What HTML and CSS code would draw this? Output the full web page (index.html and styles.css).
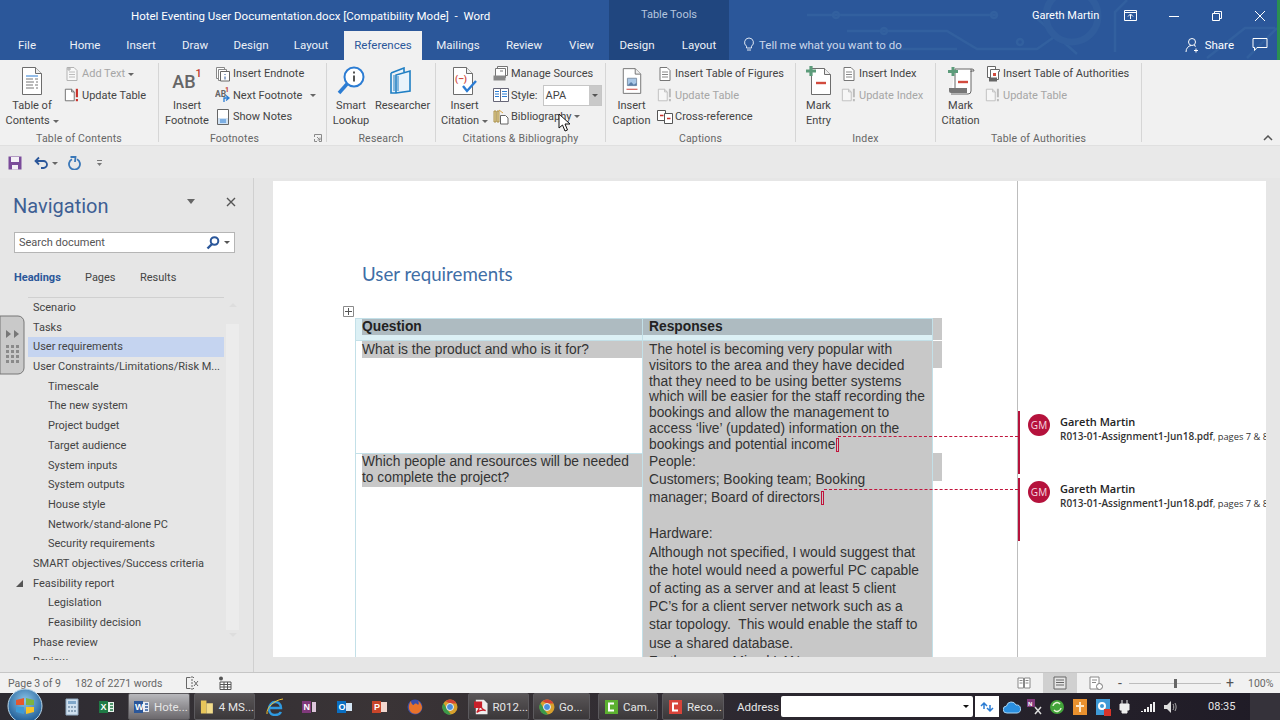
FILE: index.html
```html
<!DOCTYPE html>
<html lang="en">
<head>
<meta charset="utf-8">
<title>Hotel Eventing User Documentation.docx - Word</title>
<link rel="stylesheet" href="styles.css">
</head>
<body>
<svg class="defs" width="0" height="0" aria-hidden="true">
  <defs>
    <symbol id="doc" viewBox="0 0 24 30"><path d="M2.5 1.5h13l6 6v21h-19z" fill="#fff" stroke="#6d6d6d"/><path d="M15.500 1.500v6h6" fill="#eee" stroke="#6d6d6d"/></symbol>
    <symbol id="smalldoc" viewBox="0 0 16 16"><path d="M3 1.500h7l3 3v10H3z" fill="#fff" stroke="#777"/><path d="M5 6h6M5 8.500h6M5 11h6" stroke="#888"/></symbol>
    <symbol id="update" viewBox="0 0 18 16"><path d="M1.500 1.500h7l3 3v10h-10z" fill="#fff" stroke="#666"/><path d="M8.500 1.500v3h3" fill="none" stroke="#666"/><path d="M14.500 1v9.500" stroke="#c8312a" stroke-width="2.400"/><path d="M14.500 12.500v2.500" stroke="#c8312a" stroke-width="2.400"/></symbol>
    <symbol id="update-off" viewBox="0 0 18 16"><path d="M1.500 1.500h7l3 3v10h-10z" fill="#f6f6f6" stroke="#bbb"/><path d="M8.500 1.500v3h3" fill="none" stroke="#bbb"/><path d="M14.500 1v9.500M14.500 12.500v2.500" stroke="#bbb" stroke-width="2.200"/></symbol>
  </defs>
</svg>
<div class="app">
  <header class="head">
    <svg class="circuit" viewBox="0 0 470 59" width="470" height="59" aria-hidden="true">
      <g fill="none" stroke="#32609f" stroke-width="2.500">
        <path d="M0 15h190M40 31h100l30 18h60l20-14M70 49h80"/>
        <circle cx="29" cy="15" r="3"/><circle cx="187" cy="15" r="3"/><circle cx="77" cy="31" r="3"/><circle cx="213" cy="42" r="3"/>
        <path d="M225 14l45 40M320 0l-12 12v40M400 58l38-30h30M440 58l30-30"/>
      </g>
      <circle cx="265" cy="16" r="26" fill="none" stroke="#305d9d" stroke-width="7"/>
    </svg>
    <div class="title-row">
      <div class="doc-title">Hotel Eventing User Documentation.docx [Compatibility Mode]  -  Word</div>
      <div class="context-label">Table Tools</div>
      <div class="user">Gareth Martin</div>
      <svg class="win win-ribbon" width="16" height="14" viewBox="0 0 16 14"><path d="M1.500 1.500h12v10h-12zM1.500 3.500h12M7.500 10V5.500M5 7.500l2.500-2.500 2.500 2.500" fill="none" stroke="#fff"/></svg>
      <svg class="win win-min" width="12" height="12" viewBox="0 0 12 12"><path d="M1 6.500h10" stroke="#fff"/></svg>
      <svg class="win win-max" width="12" height="12" viewBox="0 0 12 12"><path d="M1.500 3.500h7v7h-7zM3.500 3.500v-2h7v7h-2" fill="none" stroke="#fff"/></svg>
      <svg class="win win-close" width="12" height="12" viewBox="0 0 12 12"><path d="M1 1l10 10M11 1L1 11" stroke="#fff"/></svg>
    </div>
    <nav class="tab-row">
      <span class="tab w-file">File</span>
      <span class="tab w-home">Home</span>
      <span class="tab w-insert">Insert</span>
      <span class="tab w-draw">Draw</span>
      <span class="tab w-design">Design</span>
      <span class="tab w-layout">Layout</span>
      <span class="tab tab-active w-refs">References</span>
      <span class="tab w-mail">Mailings</span>
      <span class="tab w-review">Review</span>
      <span class="tab w-view">View</span>
      <div class="context-tabs">
        <span class="tab w-cdesign">Design</span>
        <span class="tab w-clayout">Layout</span>
      </div>
      <div class="tell">
        <svg width="12" height="15" viewBox="0 0 12 15"><path d="M6 1a4.500 4.500 0 0 0-2.500 8.200V11h5V9.200A4.500 4.500 0 0 0 6 1zM4 13h4" fill="none" stroke="#dfe7f3"/></svg>
        <span>Tell me what you want to do</span>
      </div>
      <div class="share">
        <svg width="15" height="16" viewBox="0 0 15 16"><circle cx="7" cy="5" r="3.500" fill="none" stroke="#fff"/><path d="M1 15c0-4 2.500-6 5-6.500M9 8.500c1 .3 1.500.6 2 1M11 11.500v4M9 13.500h4" fill="none" stroke="#fff"/></svg>
        <span>Share</span>
      </div>
      <svg class="comment-ico" width="16" height="15" viewBox="0 0 16 15"><path d="M1 1.500h14v9H5l-2.500 3v-3H1z" fill="none" stroke="#fff"/></svg>
    </nav>
  </header>

  <section class="ribbon">
    <div class="group g-toc">
      <div class="group-body">
        <div class="large w64">
          <div class="large-ico"><svg width="24" height="30" viewBox="0 0 24 30"><use href="#doc"/><path d="M6 10h12" stroke="#2b7cd3"/><path d="M6 13h7M6 16h8M6 19h7M6 22h8" stroke="#777"/><path d="M15 13h3M16 16h2M15 19h3M16 22h2" stroke="#777"/></svg></div>
          <div class="large-label">Table of<br>Contents <i class="caret"></i></div>
        </div>
        <div class="small-col">
          <div class="small off"><svg class="ico" width="16" height="16" viewBox="0 0 16 16"><use href="#smalldoc" opacity=".5"/><path d="M3 3h4M5 1v4" stroke="#aaa"/></svg><span>Add Text <i class="caret"></i></span></div>
          <div class="small"><svg class="ico" width="16" height="16" viewBox="0 0 18 16"><use href="#update"/></svg><span>Update Table</span></div>
        </div>
      </div>
      <div class="group-label">Table of Contents</div>
    </div>

    <div class="group g-foot">
      <div class="group-body">
        <div class="large w56">
          <div class="large-ico ab">AB<sup>1</sup></div>
          <div class="large-label">Insert<br>Footnote</div>
        </div>
        <div class="small-col">
          <div class="small"><svg class="ico" width="16" height="16" viewBox="0 0 16 16"><path d="M1.500 1.500h8v11h-8z" fill="#fff" stroke="#888"/><path d="M3.500 3.500h8v11h-8z" fill="#fff" stroke="#888"/><path d="M5.500 5.500h9v9.500h-9z" fill="#fff" stroke="#666"/><path d="M10 8v1M10 10.500v3" stroke="#2b579a"/></svg><span>Insert Endnote</span></div>
          <div class="small"><svg class="ico" width="16" height="16" viewBox="0 0 16 16"><text x="0" y="10" class="mini-ab">AB</text><text x="10" y="5" class="mini-one">1</text><path d="M9 15V11h4M11 8.500l3 2.500-3 2.500" fill="none" stroke="#2b7cd3" stroke-width="1.300"/></svg><span>Next Footnote</span><i class="caret far"></i></div>
          <div class="small"><svg class="ico" width="16" height="16" viewBox="0 0 16 16"><path d="M2.500 .5h11v15h-11z" fill="#fff" stroke="#666"/><path d="M3 9h10v6H3z" fill="#cfe1f3"/><path d="M5 11h6M5 13h6" stroke="#2b7cd3"/></svg><span>Show Notes</span></div>
        </div>
      </div>
      <div class="group-label label-foot">Footnotes</div>
      <svg class="launcher" width="8" height="8" viewBox="0 0 8 8"><path d="M.5 3V.5H7.500V7.500H5M3 3l3 3M6 3.500V6H3.500M.5 5v2.500H3" fill="none" stroke="#8a8a8a"/></svg>
    </div>

    <div class="group g-res">
      <div class="group-body">
        <div class="large w48">
          <div class="large-ico"><svg width="28" height="30" viewBox="0 0 28 30"><circle cx="17" cy="11" r="9.500" fill="#fff" stroke="#2b7cd3" stroke-width="2"/><path d="M10 18L2 27" stroke="#2b7cd3" stroke-width="3.500"/><path d="M17 9.500v6" stroke="#555" stroke-width="2"/><path d="M17 5.500v2" stroke="#555" stroke-width="2"/></svg></div>
          <div class="large-label">Smart<br>Lookup</div>
        </div>
        <div class="large w52">
          <div class="large-ico"><svg width="22" height="28" viewBox="0 0 22 28"><path d="M1 6l13-5v4M1 6v20h5V8l14-4v20L6 26" fill="#e9f3fb" stroke="#1f7fc4" stroke-width="1.600"/><path d="M4 8v16M8 9v15" stroke="#1f7fc4"/></svg></div>
          <div class="large-label">Researcher</div>
        </div>
      </div>
      <div class="group-label">Research</div>
    </div>

    <div class="group g-cit">
      <div class="group-body">
        <div class="large w57">
          <div class="large-ico"><svg width="28" height="30" viewBox="0 0 28 30"><use href="#doc" width="24" height="30"/><text x="4" y="16" class="mini-red">(–)</text><path d="M12 20l4 5 9-10" fill="none" stroke="#2b7cd3" stroke-width="2.400"/></svg></div>
          <div class="large-label">Insert<br>Citation <i class="caret"></i></div>
        </div>
        <div class="small-col">
          <div class="small"><svg class="ico" width="16" height="16" viewBox="0 0 16 16"><path d="M4.500 .5h10v9h-10z" fill="#fff" stroke="#777"/><path d="M2.500 2.500h10v9h-10z" fill="#fff" stroke="#777"/><path d="M.5 9.500h12v5H.5z" fill="#888"/><path d="M7 5h3" stroke="#777"/></svg><span>Manage Sources</span></div>
          <div class="small"><svg class="ico" width="16" height="16" viewBox="0 0 16 16"><path d="M.5 1.500h7v13h-7zM7.500 1.500h8v13h-8z" fill="#fff" stroke="#667"/><path d="M2 4.500h4M2 7h4M2 9.500h4M9 4.500h5M9 7h5M9 9.500h5" stroke="#2b7cd3"/></svg><span>Style:</span><span class="combo"><span class="combo-val">APA</span><span class="combo-btn"><i class="caret dark"></i></span></span></div>
          <div class="small"><svg class="ico" width="16" height="16" viewBox="0 0 16 16"><path d="M1 2h2v11H1zM4 2h2v11H4z" fill="#e8d9a0" stroke="#a98f4a"/><path d="M7.500 6.500h5l2.500 2.500v6h-7.500z" fill="#fff" stroke="#666"/><path d="M6 1l4 3" stroke="#d9a441"/></svg><span>Bibliography</span><i class="caret near"></i></div>
        </div>
      </div>
      <div class="group-label">Citations &amp; Bibliography</div>
    </div>

    <div class="group g-cap">
      <div class="group-body">
        <div class="large w51">
          <div class="large-ico"><svg width="22" height="28" viewBox="0 0 24 30"><use href="#doc"/><path d="M7 12h10v8H7z" fill="#a9c7e6" stroke="#7c8ea3"/><path d="M7 20l4-4 3 3 3-2v3z" fill="#5b7fa8"/><path d="M6 24h12" stroke="#c8312a"/></svg></div>
          <div class="large-label">Insert<br>Caption</div>
        </div>
        <div class="small-col">
          <div class="small"><svg class="ico" width="16" height="16" viewBox="0 0 16 16"><use href="#smalldoc"/></svg><span>Insert Table of Figures</span></div>
          <div class="small off"><svg class="ico" width="16" height="16" viewBox="0 0 18 16"><use href="#update-off"/></svg><span>Update Table</span></div>
          <div class="small"><svg class="ico" width="16" height="16" viewBox="0 0 16 16"><path d="M.5 1.500h8v10h-8z" fill="#fff" stroke="#555"/><path d="M7.500 4.500h8v10h-8z" fill="#fff" stroke="#555"/><path d="M3 6.500h3.500M10 9.500h3.500" stroke="#c8312a" stroke-width="1.500"/></svg><span>Cross-reference</span></div>
        </div>
      </div>
      <div class="group-label">Captions</div>
    </div>

    <div class="group g-idx">
      <div class="group-body">
        <div class="large w45">
          <div class="large-ico"><svg width="28" height="30" viewBox="0 0 28 30"><path d="M6.500 2.500h13l6 6v20h-19z" fill="#fff" stroke="#6d6d6d"/><path d="M19.500 2.500v6h6" fill="#eee" stroke="#6d6d6d"/><path d="M11 17h10" stroke="#d24b3e" stroke-width="2.400"/><path d="M6 0v10M1 5h10" stroke="#5c9b7a" stroke-width="3.200"/></svg></div>
          <div class="large-label">Mark<br>Entry</div>
        </div>
        <div class="small-col">
          <div class="small"><svg class="ico" width="16" height="16" viewBox="0 0 16 16"><use href="#smalldoc"/></svg><span>Insert Index</span></div>
          <div class="small off"><svg class="ico" width="16" height="16" viewBox="0 0 18 16"><use href="#update-off"/></svg><span>Update Index</span></div>
        </div>
      </div>
      <div class="group-label">Index</div>
    </div>

    <div class="group g-toa">
      <div class="group-body">
        <div class="large w49">
          <div class="large-ico"><svg width="30" height="30" viewBox="0 0 30 30"><path d="M9 3h17a2 2 0 0 1 2 2h-3v20a3 3 0 0 1-3 3H5" fill="#fff" stroke="#666"/><path d="M3 22h18v5H5a2 2 0 0 1-2-2z" fill="#777"/><path d="M9 3v19M25 3v3" stroke="#666"/><path d="M12 16h10" stroke="#d24b3e" stroke-width="2.400"/><path d="M7 1v9M2 5.500h10" stroke="#5c9b7a" stroke-width="3"/></svg></div>
          <div class="large-label">Mark<br>Citation</div>
        </div>
        <div class="small-col">
          <div class="small"><svg class="ico" width="16" height="16" viewBox="0 0 16 16"><path d="M2.500 .5h8v11h-8z" fill="#fff" stroke="#666"/><path d="M5.500 3.500h9v2h-1v8h-8z" fill="#fff" stroke="#666"/><path d="M4 11.500h8v4H4z" fill="#666"/><path d="M8 7h3v3H8z" fill="#d24b3e"/></svg><span>Insert Table of Authorities</span></div>
          <div class="small off"><svg class="ico" width="16" height="16" viewBox="0 0 18 16"><use href="#update-off"/></svg><span>Update Table</span></div>
        </div>
      </div>
      <div class="group-label">Table of Authorities</div>
    </div>
    <svg class="collapse" width="10" height="6" viewBox="0 0 10 6"><path d="M1 5l4-4 4 4" fill="none" stroke="#555" stroke-width="1.500"/></svg>
    <svg class="pointer" width="16" height="20" viewBox="0 0 16 20"><path d="M2 1v14l3.500-3 2.500 6 2.500-1-2.500-6h5z" fill="#fff" stroke="#111"/></svg>
  </section>

  <div class="qat">
    <svg class="q-save" width="14" height="14" viewBox="0 0 14 14"><path d="M.5.5h13v13H.5z" fill="#7a4b9a"/><path d="M3 1h8v5H3z" fill="#f3f0f6"/><path d="M4 9h6v4.500H4z" fill="#f3f0f6"/></svg>
    <svg class="q-undo" width="15" height="14" viewBox="0 0 15 14"><path d="M5 1.500L1.500 5 5 8.500M2 5h7.500a3.500 3.500 0 0 1 0 7H7" fill="none" stroke="#2b579a" stroke-width="1.800"/></svg>
    <i class="caret q-caret"></i>
    <svg class="q-redo" width="14" height="14" viewBox="0 0 14 14"><path d="M5 3.200a5.500 5.500 0 1 0 5 0" fill="none" stroke="#3b78b8" stroke-width="1.800"/><path d="M3.500 1h5l-.5 5" fill="none" stroke="#3b78b8" stroke-width="1.800"/></svg>
    <svg class="q-more" width="7" height="8" viewBox="0 0 7 8"><path d="M1 1.500h5" stroke="#777"/><path d="M1 4h5l-2.500 3z" fill="#777"/></svg>
  </div>

  <main class="workspace">
    <aside class="nav">
      <div class="nav-head">
        <h2 class="nav-title">Navigation</h2>
        <i class="nav-drop"></i>
        <svg class="nav-close" width="10" height="10" viewBox="0 0 10 10"><path d="M1 1l8 8M9 1L1 9" stroke="#555" stroke-width="1.400"/></svg>
      </div>
      <div class="search">
        <span class="search-text">Search document</span>
        <svg width="14" height="14" viewBox="0 0 14 14"><circle cx="8.500" cy="5" r="3.800" fill="none" stroke="#2b579a" stroke-width="2"/><path d="M6 8l-4.500 4.500" stroke="#2b579a" stroke-width="2.400"/></svg>
        <i class="caret dark"></i>
      </div>
      <div class="nav-tabs">
        <span class="nav-tab nav-tab-on">Headings</span>
        <span class="nav-tab">Pages</span>
        <span class="nav-tab">Results</span>
      </div>
      <div class="tree-wrap">
        <ul class="tree">
          <li>Scenario</li>
          <li>Tasks</li>
          <li class="sel">User requirements</li>
          <li>User Constraints/Limitations/Risk M...</li>
          <li class="sub">Timescale</li>
          <li class="sub">The new system</li>
          <li class="sub">Project budget</li>
          <li class="sub">Target audience</li>
          <li class="sub">System inputs</li>
          <li class="sub">System outputs</li>
          <li class="sub">House style</li>
          <li class="sub">Network/stand-alone PC</li>
          <li class="sub">Security requirements</li>
          <li>SMART objectives/Success criteria</li>
          <li class="open">Feasibility report</li>
          <li class="sub">Legislation</li>
          <li class="sub">Feasibility decision</li>
          <li>Phase review</li>
          <li>Review</li>
        </ul>
        <div class="scroll">
          <i class="sc-up"></i>
          <div class="sc-track"></div>
          <i class="sc-down"></i>
        </div>
      </div>
      <div class="dock">
        <svg width="26" height="60" viewBox="0 0 26 60"><path d="M0 1h18a6 6 0 0 1 6 6v46a6 6 0 0 1-6 6H0z" fill="#c9c9c9" stroke="#777"/><path d="M6 15l5 4-5 4zM14 15l5 4-5 4z" fill="#777"/><path d="M6 30h3v3H6zM11 30h3v3h-3zM16 30h3v3h-3zM6 35h3v3H6zM11 35h3v3h-3zM16 35h3v3h-3zM6 40h3v3H6zM11 40h3v3h-3zM16 40h3v3h-3zM6 45h3v3H6zM11 45h3v3h-3zM16 45h3v3h-3z" fill="#8a8a8a"/></svg>
      </div>
    </aside>

    <div class="docview">
      <div class="sheet">
        <article class="page">
          <h1 class="doc-h">User requirements</h1>
          <div class="dtable">
            <svg class="handle" width="11" height="11" viewBox="0 0 11 11"><path d="M.5.5h10v10H.5z" fill="#fff" stroke="#8a8a8a"/><path d="M5.500 2v7M2 5.500h7" stroke="#555"/></svg>
            <div class="cell c-head"><div class="shade shade-head"><b>Question</b></div></div>
            <div class="cell c-head c-r"><div class="shade-head r-head"><b>Responses</b></div></div>
            <div class="stub stub-h"></div>

            <div class="cell c-q"><div class="shade q1">What is the product and who is it for?</div></div>
            <div class="cell c-resp r1">The hotel is becoming very popular with<br>visitors to the area and they have decided<br>that they need to be using better systems<br>which will be easier for the staff recording the<br>bookings and allow the management to<br>access ‘live’ (updated) information on the<br>bookings and potential income<i class="mark"></i></div>
            <div class="stub stub-1"></div>

            <div class="cell c-q"><div class="shade q2">Which people and resources will be needed<br>to complete the project?</div></div>
            <div class="cell c-resp r2">People:<br>Customers; Booking team; Booking<br>manager; Board of directors<i class="mark"></i><br><br>Hardware:<br>Although not specified, I would suggest that<br>the hotel would need a powerful PC capable<br>of acting as a server and at least 5 client<br>PC’s for a client server network such as a<br>star topology.&nbsp; This would enable the staff to<br>use a shared database.<br>Furthermore, Mixed LAN</div>
            <div class="stub stub-2"></div>
          </div>
        </article>
        <aside class="comments">
          <div class="comment">
            <span class="avatar">GM</span>
            <div class="c-body"><div class="c-name">Gareth Martin</div><div class="c-src"><b>R013-01-Assignment1-Jun18.pdf</b>, pages 7 &amp; 8</div></div>
          </div>
          <div class="comment">
            <span class="avatar">GM</span>
            <div class="c-body"><div class="c-name">Gareth Martin</div><div class="c-src"><b>R013-01-Assignment1-Jun18.pdf</b>, pages 7 &amp; 8</div></div>
          </div>
        </aside>
        <i class="link link-1"></i>
        <i class="link link-2"></i>
      </div>
    </div>
  </main>

  <footer class="status">
    <span class="st-page">Page 3 of 9</span>
    <span class="st-words">182 of 2271 words</span>
    <svg class="st-a" width="14" height="14" viewBox="0 0 14 14"><path d="M5.500 1.500h-4v11h4M8 1.500h1M8 12.500h1" fill="none" stroke="#666"/><path d="M7 0v14" stroke="#666" stroke-dasharray="2 1"/><path d="M9 5l4 5M13 5l-4 5" stroke="#666"/></svg>
    <svg class="st-b" width="14" height="14" viewBox="0 0 14 14"><circle cx="3" cy="2.500" r="2" fill="#555"/><path d="M2 6h11v7.500H2z" fill="#fff" stroke="#555"/><path d="M2 8.500h11M2 11h11M6 6v7M9.500 6v7" stroke="#555"/></svg>
    <div class="views">
      <svg width="14" height="14" viewBox="0 0 14 14"><path d="M1 2h5.500v10H1zM7.500 2H13v10H7.500z" fill="#fff" stroke="#888"/><path d="M2.500 4.500h3M2.500 7h3M8.500 4.500h3M8.500 7h3" stroke="#888"/></svg>
      <span class="view-on"><svg width="14" height="14" viewBox="0 0 14 14"><path d="M1 1h12v12H1z" fill="#e4e4e4" stroke="#666"/><path d="M3 4h8M3 6.500h8M3 9h8" stroke="#666"/></svg></span>
      <svg width="14" height="14" viewBox="0 0 14 14"><path d="M1 1h9v12H1z" fill="#fff" stroke="#888"/><path d="M3 4h5M3 6.500h4" stroke="#888"/><circle cx="10.500" cy="10.500" r="3" fill="#fff" stroke="#777"/></svg>
    </div>
    <div class="zoom">
      <span class="z-btn">-</span>
      <span class="z-track"><i class="z-thumb"></i></span>
      <span class="z-btn">+</span>
      <span class="z-val">100%</span>
    </div>
  </footer>

  <div class="taskbar">
    <div class="orb-slot"><svg class="orb" width="36" height="36" viewBox="0 0 36 36"><defs><radialGradient id="og" cx=".5" cy=".35" r=".7"><stop offset="0" stop-color="#8cc6ea"/><stop offset="1" stop-color="#12508c"/></radialGradient></defs><circle cx="18" cy="18" r="17" fill="url(#og)" stroke="#bcd9ec"/><path d="M9 12l8-2v7H9z" fill="#e4572e"/><path d="M19 10l8 2v5h-8z" fill="#7cb342"/><path d="M9 19h8v7l-8-2z" fill="#3f9ad6"/><path d="M19 19h8v5l-8 2z" fill="#f7c325"/></svg></div>
    <span class="slot"><svg width="14" height="18" viewBox="0 0 14 18"><path d="M1 1h12v16H1z" fill="#cfe0ef" stroke="#8fa9c1"/><path d="M3 3h8v3H3z" fill="#7ea6c9"/><path d="M3 8h2v2H3zM6 8h2v2H6zM9 8h2v2H9zM3 12h2v2H3zM6 12h2v2H6zM9 12h2v2H9z" fill="#8aa3ba"/></svg></span>
    <span class="slot"><svg width="16" height="16" viewBox="0 0 16 16"><path d="M0 2h9v12H0z" fill="#1f7a45"/><path d="M9 3h6v10H9z" fill="#e8f3ec"/><path d="M11 5h3M11 8h3M11 11h3" stroke="#1f7a45" stroke-width="1.500"/><text x="1.500" y="11" class="tb-letter">X</text></svg></span>
    <div class="tbtn tbtn-on w-word"><svg width="16" height="16" viewBox="0 0 16 16"><path d="M0 2h9v12H0z" fill="#2b579a"/><path d="M9 3h6v10H9z" fill="#e8edf5"/><path d="M11 5h3M11 8h3M11 11h3" stroke="#2b579a" stroke-width="1.500"/><text x="1" y="11" class="tb-letter">W</text></svg><span>Hote...</span></div>
    <div class="tbtn w-folder"><svg width="16" height="16" viewBox="0 0 16 16"><path d="M1 1h6v14H1z" fill="#e8c65a"/><path d="M7 4h7v11H7z" fill="#f3dc8a"/></svg><span>4 MS...</span></div>
    <span class="slot"><svg width="18" height="18" viewBox="0 0 18 18"><path d="M3 10h12c0-4-3-6-6-6s-6 3-6 7 3 6 6 6c3 0 5-1 6-3" fill="none" stroke="#2f9ae0" stroke-width="2.400"/><path d="M1 16C0 10 8 2 17 1" fill="none" stroke="#f2c230"/></svg></span>
    <span class="slot"><svg width="15" height="16" viewBox="0 0 15 16"><path d="M0 2h9v12H0z" fill="#80397b"/><path d="M10 3h4v10h-4z" fill="#dcc6da"/><text x="1.500" y="11" class="tb-letter">N</text></svg></span>
    <span class="slot"><svg width="15" height="16" viewBox="0 0 15 16"><path d="M0 2h9v12H0z" fill="#0a6fc2"/><path d="M9 4h6v8H9z" fill="#d5e7f6"/><text x="1.500" y="11" class="tb-letter">O</text></svg></span>
    <span class="slot"><svg width="15" height="16" viewBox="0 0 15 16"><path d="M0 2h9v12H0z" fill="#c8452a"/><path d="M9 3h6v10H9z" fill="#f2d7cf"/><text x="2" y="11" class="tb-letter">P</text></svg></span>
    <span class="slot"><svg width="16" height="16" viewBox="0 0 16 16"><circle cx="8" cy="8" r="7.500" fill="#3a4ea8"/><path d="M4 2c-3 4-3 9 1 12 4 2 9 0 10-5 0-3-2-6-4-7 1 2 1 3 0 4-1-2-4-2-4 0-2 0-3-2-3-4z" fill="#e8722a"/></svg></span>
    <span class="slot"><svg width="16" height="16" viewBox="0 0 16 16"><circle cx="8" cy="8" r="7.500" fill="#d8a02c"/><path d="M8 .5A7.500 7.500 0 0 1 14.500 4.500H8L3.500 2.200A7.500 7.500 0 0 1 8 .5z" fill="#d64535"/><path d="M1.500 4l4 7 3.500 4.500A7.500 7.500 0 0 1 1.500 4z" fill="#3b9a4a"/><circle cx="8" cy="8" r="3.500" fill="#4a8fdc" stroke="#eee"/></svg></span>
    <div class="tbtn w-r012"><svg width="16" height="18" viewBox="0 0 16 18"><path d="M2 1h9l4 4v12H2z" fill="#eee"/><path d="M0 3h9v7H0z" fill="#c8202a"/><path d="M6 8c0 4-2 6-3 7 3-2 7-3 10-2-3-1-5-3-6-6z" fill="none" stroke="#c8202a" stroke-width="1.400"/></svg><span>R012...</span></div>
    <div class="tbtn w-go"><svg width="16" height="16" viewBox="0 0 16 16"><circle cx="8" cy="8" r="7.500" fill="#d8a02c"/><path d="M8 .5A7.500 7.500 0 0 1 14.500 4.500H8L3.500 2.200A7.500 7.500 0 0 1 8 .5z" fill="#d64535"/><path d="M1.500 4l4 7 3.500 4.500A7.500 7.500 0 0 1 1.500 4z" fill="#3b9a4a"/><circle cx="8" cy="8" r="3.500" fill="#4a8fdc" stroke="#eee"/></svg><span>Go...</span></div>
    <div class="tbtn w-cam"><svg width="15" height="16" viewBox="0 0 15 16"><path d="M1 1h13v14H1z" fill="#5cb030"/><path d="M10 4.500H5v7h5" fill="none" stroke="#fff" stroke-width="2"/></svg><span>Cam...</span></div>
    <div class="tbtn w-reco"><svg width="15" height="16" viewBox="0 0 15 16"><path d="M1 1h13v14H1z" fill="#d8443a"/><path d="M10 4.500H5v7h5" fill="none" stroke="#fff" stroke-width="2"/></svg><span>Reco...</span></div>
    <span class="addr-label">Address</span>
    <div class="addr"><i class="caret black"></i></div>
    <div class="addr-go"><svg width="14" height="14" viewBox="0 0 14 14"><path d="M1 6l3-3 3 3M4 3v6" fill="none" stroke="#2b7cd3" stroke-width="1.500"/><path d="M7 8l3 3 3-3M10 11V5" fill="none" stroke="#2b7cd3" stroke-width="1.500"/></svg></div>
    <div class="tray">
      <span class="t-slot"><svg width="18" height="14" viewBox="0 0 18 14"><path d="M4 13a3.500 3.500 0 0 1-.5-7A5 5 0 0 1 13 5a4 4 0 0 1 1 8z" fill="#2a8fe0" stroke="#a9d5f5"/></svg></span>
      <span class="t-slot"><svg width="15" height="16" viewBox="0 0 15 16"><path d="M0 0h8v8H0z" fill="#80397b"/><path d="M8 8l6 7M14 8l-6 7" stroke="#ddd" stroke-width="1.500"/><text x="1" y="6.500" class="tb-tiny">N</text></svg></span>
      <span class="t-slot"><svg width="16" height="16" viewBox="0 0 16 16"><circle cx="8" cy="8" r="7" fill="#43a43a"/><path d="M4 7a4 4 0 0 1 7-2M12 9a4 4 0 0 1-7 2" fill="none" stroke="#e8f5d8" stroke-width="1.500"/></svg></span>
      <span class="t-slot"><svg width="16" height="18" viewBox="0 0 16 18"><path d="M1 1h14v16H1z" fill="#e9902e"/><path d="M8 4v10M4 8h8" stroke="#fbe6c8" stroke-width="2"/></svg></span>
      <span class="t-slot"><svg width="16" height="18" viewBox="0 0 16 18"><path d="M1 1h14v16H1z" fill="#3f9ad6"/><circle cx="7" cy="8" r="3" fill="none" stroke="#fff" stroke-width="2"/><path d="M9 11h7v7H9z" fill="#d8342a"/></svg></span>
      <span class="t-slot"><svg width="14" height="16" viewBox="0 0 14 16"><path d="M2 5h9v6H2zM4 11h5v3H4zM4 1v4M9 1v4" fill="#eee" stroke="#eee"/></svg></span>
      <span class="t-slot"><svg width="14" height="12" viewBox="0 0 14 12"><path d="M1 11V10M4 11V8M7 11V6M10 11V3M13 11V1" stroke="#eee" stroke-width="2"/></svg></span>
      <span class="t-slot"><svg width="14" height="14" viewBox="0 0 14 14"><path d="M1 5h3l4-4v12l-4-4H1z" fill="#ddd"/><path d="M10 4c1 2 1 4 0 6M12 3c1.500 2.500 1.500 5.500 0 8" fill="none" stroke="#aaa"/></svg></span>
    </div>
    <span class="clock">08:35</span>
    <span class="show-desk"></span>
  </div>
</div>
</body>
</html>
```

FILE: styles.css
```css
* { box-sizing: border-box; }
html, body { margin: 0; padding: 0; height: 100%; overflow: hidden; }
body { font-family: Roboto, "Open Sans", sans-serif; font-size: 11px; color: #444; background: #e6e6e6; }
.defs { position: absolute; }
i { font-style: normal; }
ul { list-style: none; margin: 0; padding: 0; }

.app { width: 1280px; height: 720px; display: flex; flex-direction: column; overflow: hidden; }

/* Title bar + tabs */
.head { position: relative; height: 60px; flex: none; background: #2b579a; color: #fff; border-right: 3px solid #2a9050; }
.circuit { position: absolute; left: 807px; top: 0; }
.title-row, .tab-row { position: relative; display: flex; }
.title-row { height: 31px; align-items: center; }
.doc-title { width: 609px; padding-left: 131px; font-size: 11.500px; white-space: pre; }
.context-label { width: 120px; align-self: stretch; text-align: center; line-height: 30px; background: #20467f; color: #b5c5de; }
.user { margin-left: 303px; width: 88px; font-size: 11px; }
.win { flex: none; }
.win-ribbon { margin-left: 3px; }
.win-min { margin-left: 29px; }
.win-max { margin-left: 31px; }
.win-close { margin-left: 31px; }

.tab-row { height: 29px; }
.tab { display: flex; align-items: center; justify-content: center; padding-bottom: 2px; font-size: 11.500px; color: #edf1f7; }
.tab-active { background: #f1f1f1; color: #2b579a; }
.w-file { width: 54px; } .w-home { width: 62px; } .w-insert { width: 50px; } .w-draw { width: 58px; }
.w-design { width: 54px; } .w-layout { width: 66px; } .w-refs { width: 78px; } .w-mail { width: 72px; }
.w-review { width: 60px; } .w-view { width: 55px; }
.context-tabs { display: flex; width: 120px; background: #20467f; }
.w-cdesign { width: 56px; } .w-clayout { width: 64px; padding-left: 4px; }
.tell { display: flex; align-items: center; gap: 4px; margin-left: 14px; padding-bottom: 2px; color: #cbd7ea; font-size: 11.500px; }
.share { display: flex; align-items: center; gap: 5px; margin-left: auto; padding-bottom: 2px; font-size: 11.500px; }
.comment-ico { align-self: center; margin: -2px 9px 0 18px; }

/* Ribbon */
.ribbon { position: relative; flex: none; height: 86px; padding: 3px 0; display: flex; background: #f1f1f1; border-bottom: 1px solid #e0e0e0; }
.group { position: relative; flex: none; border-right: 1px solid #d6d6d6; }
.g-toc { width: 159px; } .g-foot { width: 168px; } .g-res { width: 109px; } .g-cit { width: 170px; }
.g-cap { width: 190px; } .g-idx { width: 140px; } .g-toa { width: 206px; }
.group-body { display: flex; height: 67px; }
.group-label { height: 13px; line-height: 18px; text-align: center; color: #666; font-size: 10.500px; letter-spacing: .2px; }
.label-foot { padding-right: 16px; }
.large { flex: none; text-align: center; }
.large-ico { height: 35px; display: flex; align-items: center; justify-content: center; }
.large-label { line-height: 15px; }
.w64 { width: 64px; } .w56 { width: 56px; } .w48 { width: 48px; } .w52 { width: 52px; } .w57 { width: 57px; }
.w51 { width: 51px; } .w45 { width: 45px; } .w49 { width: 49px; }
.ab { font-size: 18px; color: #666; font-weight: 500; align-items: flex-start; padding-top: 8px; }
.ab sup { font-size: 11px; color: #c0392b; line-height: 1; margin-top: -3px; }
.small-col { flex: none; }
.small { display: flex; align-items: center; height: 21.500px; white-space: nowrap; }
.ico { flex: none; margin-right: 2px; }
.off { color: #a6a6a6; }
.caret { display: inline-block; width: 0; height: 0; border: 3px solid transparent; border-top-color: #666; border-bottom: 0; vertical-align: middle; }
.caret.dark { border-top-color: #555; }
.caret.black { border-top-color: #111; }
.far { margin-left: 8px; }
.near { margin-left: 3px; }
.combo { display: flex; margin-left: 5px; width: 59px; height: 21px; background: #fff; border: 1px solid #c6c6c6; }
.combo-val { flex: 1; padding-left: 2px; line-height: 19px; }
.combo-btn { width: 12px; background: #c9c9c9; display: flex; align-items: center; justify-content: center; }
.launcher { position: absolute; right: 4px; bottom: 0; }
.collapse { position: absolute; right: 7px; top: 75px; }
.pointer { position: absolute; left: 557px; top: 53px; }
.mini-ab { font: 700 8.500px Roboto, sans-serif; fill: #666; }
.mini-one { font: 700 7px Roboto, sans-serif; fill: #c0392b; }
.mini-red { font: 700 9px Roboto, sans-serif; fill: #d24b3e; }

/* Quick access */
.qat { flex: none; height: 32px; display: flex; align-items: center; padding: 2px 0 0 8px; background: #e9e9e9; }
.q-undo { margin-left: 12px; }
.q-caret { margin-left: 3px; }
.q-redo { margin-left: 9px; }
.q-more { margin-left: 15px; }

/* Workspace */
.workspace { flex: 1; min-height: 0; display: flex; background: #e6e6e6; border-bottom: 1px solid #c6c6c6; }
.nav { position: relative; flex: none; width: 254px; border-right: 1px solid #d0d0d0; }
.nav-head { display: flex; align-items: center; height: 50px; padding: 5px 0 0 13px; }
.nav-title { flex: none; width: 174px; margin: 0; font-size: 20px; font-weight: 400; color: #3e5f94; }
.nav-drop { width: 0; height: 0; border: 4.500px solid transparent; border-top: 5px solid #666; border-bottom: 0; margin-top: -8px; }
.nav-close { margin: -8px 0 0 31px; }
.search { display: flex; align-items: center; width: 221px; height: 21px; margin: 4px 0 0 14px; padding: 0 4px 0 4px; background: #fff; border: 1px solid #b5b5b5; }
.search-text { flex: 1; color: #555; }
.search .caret { margin-left: 4px; }
.nav-tabs { display: flex; margin: 15px 0 0 14px; height: 19px; align-items: center; }
.nav-tab { width: 71px; }
.nav-tab:nth-child(2) { width: 55px; }
.nav-tab-on { color: #2b579a; font-weight: 700; }
.tree-wrap { display: flex; height: 363px; margin: 10px 0 0 14px; padding-left: 14px; overflow: hidden; }
.tree { flex: none; width: 196px; border-top: 1px solid #d0d0d0; }
.tree li { position: relative; height: 19.700px; line-height: 19.700px; padding-left: 5px; white-space: nowrap; }
.tree .sub { padding-left: 20px; }
.tree .sel { background: #c5d4f0; }
.tree .open::before { content: ""; position: absolute; left: -12px; top: 6px; border-style: solid; border-width: 0 0 7px 7px; border-color: transparent transparent #555 transparent; }
.scroll { flex: none; width: 13px; margin-left: 2px; display: flex; flex-direction: column; align-items: center; padding-top: 3px; height: 360px; }
.sc-up, .sc-down { width: 0; height: 0; border: 4px solid transparent; margin: 3px 0; }
.sc-up { border-bottom: 4px solid #ddd; border-top: 0; }
.sc-down { border-top: 4px solid #ddd; border-bottom: 0; }
.sc-track { width: 13px; height: 306px; margin-top: 14px; background: #ececec; }
.dock { position: absolute; left: 0; top: 137px; }

/* Document */
.docview { flex: 1; min-width: 0; padding: 3px 0 15px 19px; }
.sheet { position: relative; display: flex; width: 993px; height: 476px; background: #fff; overflow: hidden; }
.page { flex: none; width: 745px; padding: 0 0 0 82px; border-right: 1px solid #bdbdbd; font-family: "Liberation Sans", Arial, sans-serif; color: #333; }
.doc-h { margin: 81px 0 32px 7px; height: 24px; font: 400 18.700px/24px Lato, "Open Sans", sans-serif; color: #3f6ea6; }
.dtable { position: relative; display: grid; grid-template-columns: 287px 291px 9px; grid-template-rows: 22px auto auto; font-size: 13.800px; }
.handle { position: absolute; left: -12px; top: -12px; }
.cell { border-left: 1px solid #c3e0e8; border-top: 1px solid #c3e0e8; }
.c-head { background: #dcf0f5; padding-bottom: 5px; line-height: 16px; color: #222; }
.c-r { border-right: 1px solid #c3e0e8; }
.shade { margin-left: 6px; background: #c8c8c8; }
.shade-head { background: #aebbc1; height: 16px; }
.r-head { padding-left: 6px; }
.q1 { height: 17px; padding-top: 1px; line-height: 16px; }
.q2 { height: 33px; line-height: 16px; }
.c-resp { background: #c8c8c8; padding-left: 6px; border-right: 1px solid #c3e0e8; white-space: nowrap; }
.c-q { white-space: nowrap; }
.r1 { padding-top: 1px; line-height: 15.800px; }
.r2 { border-top: 0; line-height: 18.200px; }
.stub { background: #c8c8c8; align-self: start; }
.stub-h { height: 22px; }
.stub-1 { height: 27px; margin-top: 1px; }
.stub-2 { height: 28px; }
.mark { display: inline-block; width: 3px; height: 14px; margin-left: 1px; vertical-align: -3px; border: 1px solid #c0143c; }

.comments { flex: 1; min-width: 0; padding-top: 230px; font-family: "Open Sans", sans-serif; overflow: hidden; }
.comment { display: flex; gap: 10px; height: 63px; margin-bottom: 4px; padding: 3px 0 0 8px; border-left: 2px solid #b5123c; white-space: nowrap; }
.avatar { flex: none; width: 22px; height: 22px; border-radius: 50%; background: #b5123c; color: #f7d9e0; font-size: 10px; line-height: 22px; text-align: center; }
.c-name { font-size: 11px; font-weight: 600; line-height: 15px; color: #222; }
.c-src { font-size: 9.300px; line-height: 14px; color: #333; }
.c-src b { font-size: 10px; font-weight: 600; }
.link { position: absolute; height: 0; border-top: 1px dashed #c0143c; }
.link-1 { left: 565px; width: 180px; top: 255px; }
.link-2 { left: 551px; width: 194px; top: 308px; }

/* Status */
.status { flex: none; display: flex; align-items: center; height: 20px; padding-left: 8px; background: #f1f1f1; color: #666; font-size: 10.500px; }
.st-page { width: 67px; }
.st-words { width: 110px; }
.st-b { margin-left: 19px; }
.views { display: flex; align-items: center; margin-left: auto; }
.view-on { display: flex; align-items: center; justify-content: center; width: 34px; height: 20px; margin: 0 12px; background: #d0d0d0; }
.zoom { display: flex; align-items: center; margin-left: 12px; }
.z-btn { width: 10px; text-align: center; font-size: 14px; color: #555; line-height: 14px; }
.z-track { position: relative; width: 92px; height: 1px; margin: 0 4px; background: #bdbdbd; }
.z-thumb { position: absolute; left: 45px; top: -4px; width: 3px; height: 9px; background: #666; }
.z-val { width: 45px; padding-left: 13px; white-space: nowrap; }

/* Taskbar */
.taskbar { position: relative; flex: none; height: 27px; display: flex; align-items: center; background: linear-gradient(90deg, #2d2b32 0%, #3a3436 30%, #2c2830 60%, #1f1b26 100%); color: #e6e6e6; font-size: 11.500px; }
.orb-slot { flex: none; width: 54px; align-self: stretch; }
.orb { display: block; margin: -5px 0 0 7px; position: relative; }
.slot { flex: none; width: 35px; display: flex; align-items: center; justify-content: center; }
.tbtn { flex: none; display: flex; align-items: center; gap: 4px; height: 27px; padding-left: 5px; border: 1px solid #5c5a5e; border-radius: 2px; background: linear-gradient(#5a5658, #3a3739); white-space: nowrap; overflow: hidden; }
.tbtn-on { background: linear-gradient(#b8b8bc, #6b686c); }
.w-word { width: 62px; margin-left: 4px; }
.w-folder { width: 61px; margin: 0 2px 0 4px; }
.w-r012 { width: 61px; margin-left: 1px; }
.w-go { width: 57px; margin-left: 4px; }
.w-cam { width: 60px; margin-left: 8px; }
.w-reco { width: 62px; margin-left: 4px; }
.tb-letter { font: 700 9px "Liberation Sans", sans-serif; fill: #fff; }
.tb-tiny { font: 700 6px "Liberation Sans", sans-serif; fill: #fff; }
.addr-label { flex: none; width: 44px; margin-left: 13px; }
.addr { flex: none; display: flex; align-items: center; justify-content: flex-end; width: 192px; height: 21px; padding-right: 4px; background: #fff; border-radius: 2px; }
.addr-go { flex: none; display: flex; align-items: center; justify-content: center; width: 24px; height: 21px; margin-left: 2px; background: #fff; }
.tray { flex: none; display: flex; margin-left: 2px; }
.t-slot { width: 22.600px; display: flex; align-items: center; justify-content: center; }
.clock { flex: none; width: 40px; margin-left: 20px; font-size: 11px; text-align: center; }
.show-desk { flex: none; width: 30px; align-self: stretch; margin-left: auto; background: #35323a; }
```
